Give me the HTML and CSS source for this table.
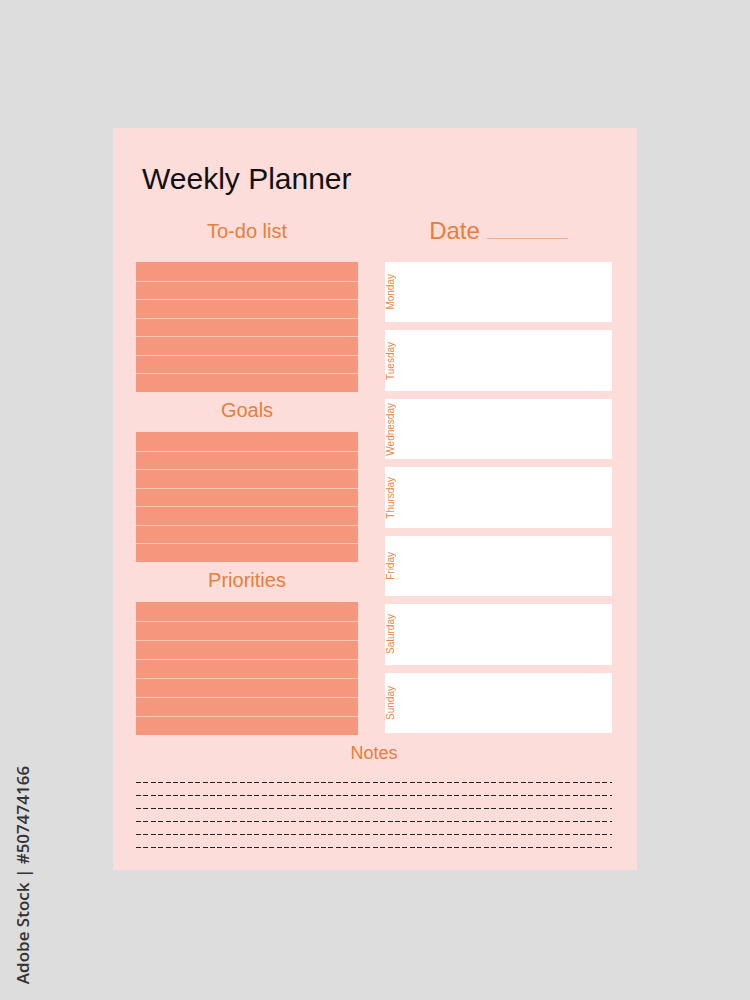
FILE: index.html
```html
<!DOCTYPE html>
<html>
<head>
<meta charset="utf-8">
<link rel="stylesheet" href="styles.css">
</head>
<body>
<div class="sheet">
  <h1 class="title">Weekly Planner</h1>
  <div class="columns">
    <div class="left">
      <h2 class="sec first">To-do list</h2>
      <div class="block"><div></div><div></div><div></div><div></div><div></div><div></div><div></div></div>
      <h2 class="sec">Goals</h2>
      <div class="block"><div></div><div></div><div></div><div></div><div></div><div></div><div></div></div>
      <h2 class="sec">Priorities</h2>
      <div class="block tall"><div></div><div></div><div></div><div></div><div></div><div></div><div></div></div>
    </div>
    <div class="right">
      <div class="date"><span class="date-label">Date</span><span class="date-line"></span></div>
      <div class="days">
        <div class="day"><span class="day-name">Monday</span></div>
        <div class="day"><span class="day-name">Tuesday</span></div>
        <div class="day"><span class="day-name">Wednesday</span></div>
        <div class="day"><span class="day-name">Thursday</span></div>
        <div class="day"><span class="day-name">Friday</span></div>
        <div class="day"><span class="day-name">Saturday</span></div>
        <div class="day"><span class="day-name">Sunday</span></div>
      </div>
    </div>
  </div>
  <h2 class="notes-title">Notes</h2>
  <div class="notes">
    <div class="dash"></div><div class="dash"></div><div class="dash"></div>
    <div class="dash"></div><div class="dash"></div><div class="dash"></div>
  </div>
</div>
<div class="credit">Adobe Stock | #507474166</div>
</body>
</html>
```
FILE: styles.css
```css
html, body {
  margin: 0;
  padding: 0;
}
body {
  background: #dddddd;
  width: 750px;
  height: 1000px;
  position: relative;
  overflow: hidden;
  font-family: "Liberation Sans", Arial, sans-serif;
  padding: 128px 113px 0;
  box-sizing: border-box;
}
.sheet {
  width: 524px;
  height: 742px;
  background: #fcddd9;
  box-sizing: border-box;
  padding: 33px 25px 0 23px;
}
.title {
  margin: 0 0 0 6px;
  font-weight: 400;
  font-size: 30px;
  line-height: 36px;
  color: #111111;
}
.columns {
  margin-top: 24px;
  display: grid;
  grid-template-columns: 222px 227px;
  column-gap: 27px;
}
.left {
  display: flex;
  flex-direction: column;
}
.sec {
  margin: 0;
  font-weight: 400;
  font-size: 20px;
  line-height: 20px;
  color: #e87e3c;
  text-align: center;
  height: 40px;
  padding-top: 8px;
  box-sizing: border-box;
}
.sec.first {
  height: 41px;
  padding-top: 0;
}
.block {
  background: #f4977c;
  height: 130px;
  display: grid;
  grid-template-rows: repeat(7, 1fr);
}
.block.tall {
  height: 133px;
}
.block > div + div {
  border-top: 1px solid #fcc6b4;
}
.right {
  display: flex;
  flex-direction: column;
}
.date {
  display: flex;
  justify-content: center;
  align-items: flex-start;
  height: 41px;
  box-sizing: border-box;
}
.date-label {
  font-size: 24px;
  line-height: 20px;
  color: #e87e3c;
}
.date-line {
  width: 81px;
  height: 17px;
  margin-left: 7px;
  border-bottom: 1px solid #f3a88c;
}
.days {
  height: 471px;
  display: grid;
  grid-template-rows: repeat(7, 1fr);
  row-gap: 8px;
}
.day {
  background: #ffffff;
  display: flex;
  align-items: center;
}
.day-name {
  writing-mode: vertical-rl;
  transform: rotate(180deg);
  font-size: 10px;
  line-height: 10px;
  color: #e98443;
  margin-left: 1px;
}
.notes-title {
  margin: 8px 0 0;
  font-weight: 400;
  font-size: 18px;
  line-height: 20px;
  color: #e87e3c;
  text-align: center;
}
.notes {
  margin-top: 19px;
  display: flex;
  flex-direction: column;
  gap: 12px;
}
.dash {
  height: 1px;
  background: repeating-linear-gradient(to right, #222222 0 5px, transparent 5px 7.4px);
}
.credit {
  position: absolute;
  left: 22px;
  top: 875px;
  transform: translate(-50%, -50%) rotate(-90deg);
  white-space: nowrap;
  font-family: "Open Sans", sans-serif;
  font-size: 17px;
  font-weight: 600;
  color: #333333;
}
```
